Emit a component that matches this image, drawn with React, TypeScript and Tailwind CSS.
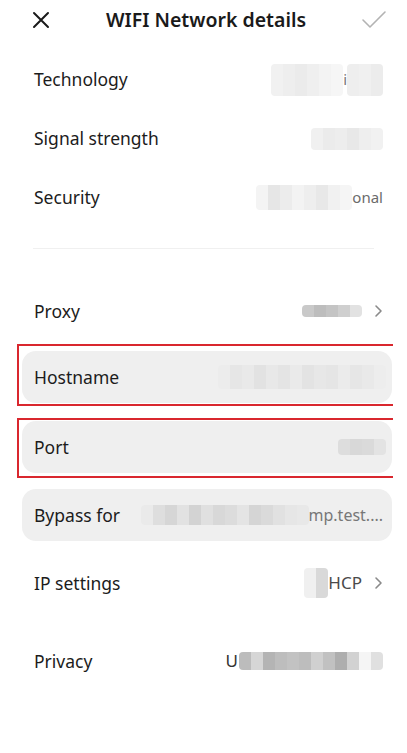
import { ReactNode } from 'react';

// pixelated blur standing in for the redacted values
const Blur = ({ cells, h = 'h-[22px]' }: { cells: string[]; h?: string }) => (
  <div className={`flex ${h} overflow-hidden rounded-[4px] blur-[0.6px]`}>
    {cells.map((c, i) => (
      <div key={i} className={`h-full w-[12px] ${c}`} />
    ))}
  </div>
);

const Chevron = () => (
  <svg width="9" height="14" viewBox="0 0 9 14" className="ml-[12px] shrink-0">
    <path d="M2 2l5 5-5 5" fill="none" stroke="#8a8a8a" strokeWidth="1.6" strokeLinecap="round" strokeLinejoin="round" />
  </svg>
);

const Row = ({ label, h = 'h-[59px]', children }: { label: string; h?: string; children?: ReactNode }) => (
  <div className={`flex ${h} items-center justify-between px-[34px] pr-[24px]`}>
    <span className="text-[17.5px] text-[#1c1c1c]">{label}</span>
    <div className="flex items-center">{children}</div>
  </div>
);

const GrayRow = ({ label, children }: { label: string; children?: ReactNode }) => (
  <div className="flex h-[52px] w-[370px] items-center justify-between rounded-[14px] bg-[#efefef] pl-[12px] pr-[6px]">
    <span className="text-[17.5px] text-[#1c1c1c]">{label}</span>
    <div className="flex items-center">{children}</div>
  </div>
);

export default function App() {
  return (
    <div className="h-[753px] w-[407px] bg-white" style={{ fontFamily: '"Noto Sans", sans-serif' }}>
      {/* header */}
      <div className="flex h-[40px] items-center justify-between px-[31px] pr-[20px]">
        <svg width="20" height="20" viewBox="0 0 20 20">
          <path d="M3 3l14 14M17 3L3 17" stroke="#1a1a1a" strokeWidth="2" strokeLinecap="round" />
        </svg>
        <span className="text-[19.5px] font-semibold text-[#1a1a1a]">WIFI Network details</span>
        <svg width="26" height="20" viewBox="0 0 26 20">
          <path d="M2 10l7 7L24 2" fill="none" stroke="#b3b3b3" strokeWidth="1.6" strokeLinecap="round" strokeLinejoin="round" />
        </svg>
      </div>

      <div className="h-[10px]" />
      <Row label="Technology">
        <div className="flex items-center">
          <Blur h="h-[32px]" cells={['bg-[#f1f1f1]', 'bg-[#eeeeee]', 'bg-[#ebebeb]', 'bg-[#efefef]', 'bg-[#f3f3f3]', 'bg-[#f6f6f6]']} />
          <span className="text-[15px] text-[#777]">i</span>
          <Blur h="h-[32px]" cells={['bg-[#eeeeee]', 'bg-[#f0f0f0]', 'bg-[#ececec]']} />
        </div>
      </Row>
      <Row label="Signal strength">
        <Blur cells={['bg-[#f0f0f0]', 'bg-[#ebebeb]', 'bg-[#ededed]', 'bg-[#e8e8e8]', 'bg-[#eeeeee]', 'bg-[#f1f1f1]']} />
      </Row>
      <Row label="Security">
        <Blur h="h-[25px]" cells={['bg-[#f4f4f4]', 'bg-[#e6e6e6]', 'bg-[#ececec]', 'bg-[#f3f3f3]', 'bg-[#eeeeee]', 'bg-[#e8e8e8]', 'bg-[#f1f1f1]', 'bg-[#f5f5f5]']} />
        <span className="text-[15px] text-[#6b6b6b]">onal</span>
      </Row>

      <div className="mx-[33px] mt-[21px] h-px bg-[#f0f0f0]" />
      <div className="h-[33px]" />

      <Row label="Proxy" h="h-[58px]">
        <Blur h="h-[12px]" cells={['bg-[#c9c9c9]', 'bg-[#bdbdbd]', 'bg-[#c4c4c4]', 'bg-[#cfcfcf]', 'bg-[#e2e2e2]']} />
        <Chevron />
      </Row>

      <div className="ml-[17px] mt-[4px] flex h-[62px] w-[376px] items-start border-y-2 border-l-2 border-[#d9272e] pl-[3px] pt-[5px]">
        <GrayRow label="Hostname">
          <Blur h="h-[24px]" cells={['bg-[#ececec]', 'bg-[#e6e6e6]', 'bg-[#e9e9e9]', 'bg-[#e2e2e2]', 'bg-[#e8e8e8]', 'bg-[#e4e4e4]', 'bg-[#eaeaea]', 'bg-[#e3e3e3]', 'bg-[#e7e7e7]', 'bg-[#e5e5e5]', 'bg-[#ebebeb]', 'bg-[#e6e6e6]', 'bg-[#e9e9e9]', 'bg-[#ededed]']} />
        </GrayRow>
      </div>

      <div className="ml-[17px] mt-[12px] flex h-[60px] w-[376px] items-start border-y-2 border-l-2 border-[#d9272e] pl-[3px] pt-[1px]">
        <GrayRow label="Port">
          <Blur h="h-[16px]" cells={['bg-[#dddddd]', 'bg-[#d8d8d8]', 'bg-[#dadada]', 'bg-[#e3e3e3]']} />
        </GrayRow>
      </div>

      <div className="ml-[22px] mt-[11px]">
        <GrayRow label="Bypass for">
          <div className="flex items-center">
            <Blur h="h-[20px]" cells={['bg-[#eaeaea]', 'bg-[#dedede]', 'bg-[#d6d6d6]', 'bg-[#e2e2e2]', 'bg-[#d3d3d3]', 'bg-[#e0e0e0]', 'bg-[#d8d8d8]', 'bg-[#dcdcdc]', 'bg-[#e4e4e4]', 'bg-[#d5d5d5]', 'bg-[#dadada]', 'bg-[#e1e1e1]', 'bg-[#e6e6e6]', 'bg-[#e8e8e8]']} />
            <span className="pr-[3px] text-[16px] text-[#777]">mp.test....</span>
          </div>
        </GrayRow>
      </div>

      <div className="h-[12px]" />
      <Row label="IP settings" h="h-[60px]">
        <Blur h="h-[30px]" cells={['bg-[#f0f0f0]', 'bg-[#d9d9d9]']} />
        <span className="text-[17px] text-[#4a4a4a]">HCP</span>
        <Chevron />
      </Row>
      <div className="h-[18px]" />
      <Row label="Privacy" h="h-[60px]">
        <span className="mr-[1px] text-[17px] text-[#333]">U</span>
        <Blur h="h-[18px]" cells={['bg-[#bcbcbc]', 'bg-[#d6d6d6]', 'bg-[#b4b4b4]', 'bg-[#bdbdbd]', 'bg-[#c2c2c2]', 'bg-[#bdbdbd]', 'bg-[#d0d0d0]', 'bg-[#c1c1c1]', 'bg-[#aeaeae]', 'bg-[#d2d2d2]', 'bg-[#f5f5f5]', 'bg-[#e0e0e0]']} />
      </Row>
    </div>
  );
}
